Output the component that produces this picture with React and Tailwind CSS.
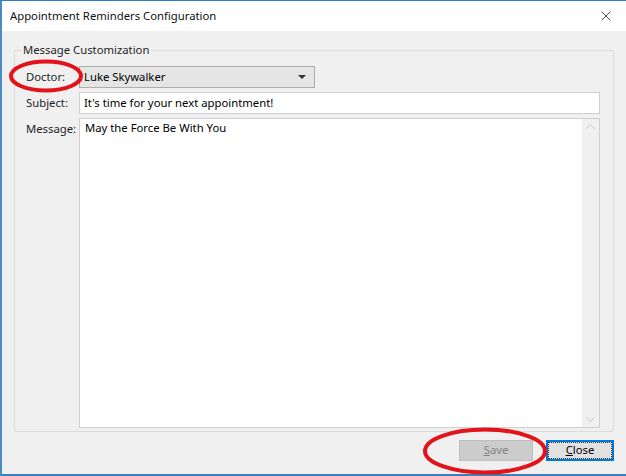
import { X } from 'lucide-react'

// Diálogo de configuração de lembretes (estilo Windows 10)

function Label({ children }) {
  return <div className="w-[54px] shrink-0 pl-[11px] pt-[3px] text-[11.3px] leading-[16px] text-[#1e1e1e]">{children}</div>
}

export default function App() {
  return (
    <div
      className="relative w-[626px] h-[476px] overflow-hidden bg-[#f0f0f0] text-[11.3px] text-black"
      style={{ fontFamily: '"Noto Sans", "Open Sans", sans-serif' }}
    >
      <div className="flex flex-col h-full border-t border-t-[#2b7bc4] border-l-2 border-l-[#4a8bc4] border-b-2 border-b-[#3c7fb9]">
        {/* barra de título */}
        <div className="h-[30px] shrink-0 bg-white flex items-center justify-between pl-[8px] pr-[12px]">
          <span className="text-[11.3px] text-[#111]">Appointment Reminders Configuration</span>
          <X className="w-[16px] h-[16px] text-[#222]" strokeWidth={1.2} />
        </div>

        {/* conteúdo */}
        <div className="flex-1 flex flex-col px-[12px] pt-[19px]">
          <div className="relative h-[382px] border border-[#dcdcdc] rounded-[2px] pt-[15px] pr-[13px]">
            <span className="absolute -top-[9px] left-[6px] px-[2px] bg-[#f0f0f0] text-[11.3px] leading-[16px] text-[#1e1e1e]">
              Message Customization
            </span>

            <div className="flex items-start">
              <Label>Doctor:</Label>
              <div className="ml-[10px] w-[236px] h-[22px] border border-[#adadad] bg-[#e5e5e5] flex items-center justify-between pl-[4px] pr-[8px]">
                <span className="text-[11.3px] text-black">Luke Skywalker</span>
                <svg width="8" height="4" viewBox="0 0 8 4"><path d="M0 0 L8 0 L4 4 Z" fill="#333" /></svg>
              </div>
            </div>

            <div className="flex items-start mt-[4px]">
              <Label>Subject:</Label>
              <div className="ml-[10px] flex-1 h-[22px] border border-[#cfcfcf] bg-white flex items-center pl-[4px]">
                <span className="text-[11.3px] text-black">It's time for your next appointment!</span>
              </div>
            </div>

            <div className="flex items-start mt-[4px]">
              <Label>Message:</Label>
              <div className="ml-[10px] flex-1 h-[310px] border border-[#cfcfcf] bg-white flex">
                <div className="flex-1 pl-[5px] pt-[1px] text-[11.3px] text-black">May the Force Be With You</div>
                <div className="w-[17px] h-full bg-[#f0f0f0] flex flex-col items-center justify-between py-[5px]">
                  <svg width="9" height="5" viewBox="0 0 9 5"><path d="M0.5 4.5 L4.5 0.5 L8.5 4.5" fill="none" stroke="#c2c2c2" /></svg>
                  <svg width="9" height="5" viewBox="0 0 9 5"><path d="M0.5 0.5 L4.5 4.5 L8.5 0.5" fill="none" stroke="#c2c2c2" /></svg>
                </div>
              </div>
            </div>
          </div>

          <div className="flex justify-end gap-[13px] mt-[8px]">
            <div className="w-[74px] h-[21px] border border-[#bfbfbf] bg-[#cccccc] flex items-center justify-center text-[11.3px] text-[#838383]">
              <span><span className="underline">S</span>ave</span>
            </div>
            <div className="w-[68px] h-[21px] border-2 border-[#0078d7] bg-[#e1e1e1] flex items-center justify-center text-[11.3px] text-black">
              <div className="w-full h-full border border-dotted border-[#333] flex items-center justify-center">
                <span><span className="underline">C</span>lose</span>
              </div>
            </div>
          </div>
        </div>
      </div>

      {/* marcações vermelhas */}
      <svg className="absolute inset-0 pointer-events-none" width="626" height="476">
        <ellipse cx="46" cy="76" rx="35" ry="14.5" fill="none" stroke="#e3131b" strokeWidth="4" />
        <ellipse cx="485" cy="451" rx="60" ry="21.5" fill="none" stroke="#e3131b" strokeWidth="4" />
      </svg>
    </div>
  )
}
